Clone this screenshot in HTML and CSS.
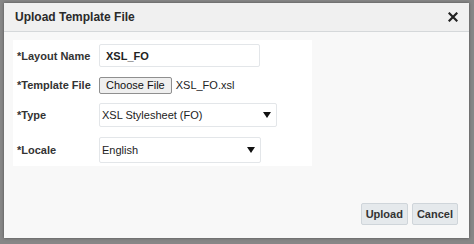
FILE: index.html
```html
<!DOCTYPE html>
<html lang="en">
<head>
    <meta charset="UTF-8">
    <title>Upload Template File</title>
    <link rel="stylesheet" href="styles.css">
</head>
<body>
    <div class="dialog">
        <div class="dialog-header">
            <h1>Upload Template File</h1>
            <svg class="close" width="10" height="10" viewBox="0 0 10 10">
                <path d="M1.5 1.5 L8.5 8.5 M8.5 1.5 L1.5 8.5" stroke="#222" stroke-width="2.2" stroke-linecap="square"/>
            </svg>
        </div>

        <div class="dialog-body">
            <div class="form-panel">
                <div class="row row-name">
                    <label>*Layout Name</label>
                    <div class="text-input">XSL_FO</div>
                </div>
                <div class="row row-file">
                    <label>*Template File</label>
                    <span class="file-btn">Choose File</span>
                    <span class="file-name">XSL_FO.xsl</span>
                </div>
                <div class="row row-type">
                    <label>*Type</label>
                    <div class="select select-type">
                        <span>XSL Stylesheet (FO)</span>
                        <span class="arrow"></span>
                    </div>
                </div>
                <div class="row row-locale">
                    <label>*Locale</label>
                    <div class="select select-locale">
                        <span>English</span>
                        <span class="arrow"></span>
                    </div>
                </div>
            </div>

            <div class="dialog-footer">
                <button class="btn">Upload</button>
                <button class="btn">Cancel</button>
            </div>
        </div>
    </div>
</body>
</html>
```

FILE: styles.css
```css
body {
    margin: 0;
    padding: 3px 5px 6px 4px;
    background: #878787;
    font-family: "Liberation Sans", Arial, sans-serif;
    color: #333;
}

.dialog {
    width: 465px;
    height: 235px;
    background: #f8f8f8;
    box-shadow: 0 0 3px rgba(0, 0, 0, 0.4);
    display: flex;
    flex-direction: column;
}

.dialog-header {
    height: 28px;
    background: #f0f0f0;
    border-bottom: 1px solid #d5d8da;
    display: flex;
    align-items: center;
    justify-content: space-between;
    padding: 0 11px 0 11px;
}

.dialog-header h1 {
    margin: 0;
    font-size: 12px;
    font-weight: bold;
    color: #2a2a2a;
}

.close {
    display: block;
}

.dialog-body {
    flex: 1;
    display: flex;
    flex-direction: column;
    padding: 8px 11px 13px 9px;
}

.form-panel {
    width: 295px;
    background: #fff;
    padding: 4px 0 3px 4px;
}

.row {
    display: flex;
    align-items: center;
}

.row label {
    width: 82px;
    font-size: 11px;
    font-weight: bold;
    color: #333;
}

.row-name { height: 23px; }
.row-file { height: 36px; }
.row-type { height: 24px; }
.row-locale { height: 26px; margin-top: 10px; }

.text-input {
    box-sizing: border-box;
    width: 161px;
    height: 23px;
    border: 1px solid #e3e6e9;
    border-radius: 2px;
    padding: 0 6px;
    display: flex;
    align-items: center;
    font-size: 11px;
    font-weight: bold;
    color: #222;
}

.file-btn {
    box-sizing: border-box;
    height: 17px;
    padding: 0 6px;
    border: 1px solid #8f8f8f;
    border-radius: 2px;
    background: #efefef;
    font-size: 11px;
    color: #111;
    display: flex;
    align-items: center;
}

.file-name {
    margin-left: 4px;
    font-size: 11px;
    color: #222;
}

.select {
    box-sizing: border-box;
    border: 1px solid #e3e6e9;
    border-radius: 2px;
    padding: 0 5px 0 2px;
    display: flex;
    align-items: center;
    justify-content: space-between;
    font-size: 11px;
    color: #222;
}

.select-type { width: 178px; height: 24px; }
.select-locale { width: 162px; height: 26px; }

.arrow {
    width: 0;
    height: 0;
    border-left: 4px solid transparent;
    border-right: 4px solid transparent;
    border-top: 6px solid #111;
}

.dialog-footer {
    margin-top: auto;
    display: flex;
    justify-content: flex-end;
    gap: 4px;
}

.btn {
    box-sizing: border-box;
    height: 22px;
    padding: 0 4px;
    border: 1px solid #cfd5da;
    border-radius: 2px;
    background: #e5e9ec;
    font-family: "Liberation Sans", Arial, sans-serif;
    font-size: 11px;
    font-weight: bold;
    color: #333;
}
```
